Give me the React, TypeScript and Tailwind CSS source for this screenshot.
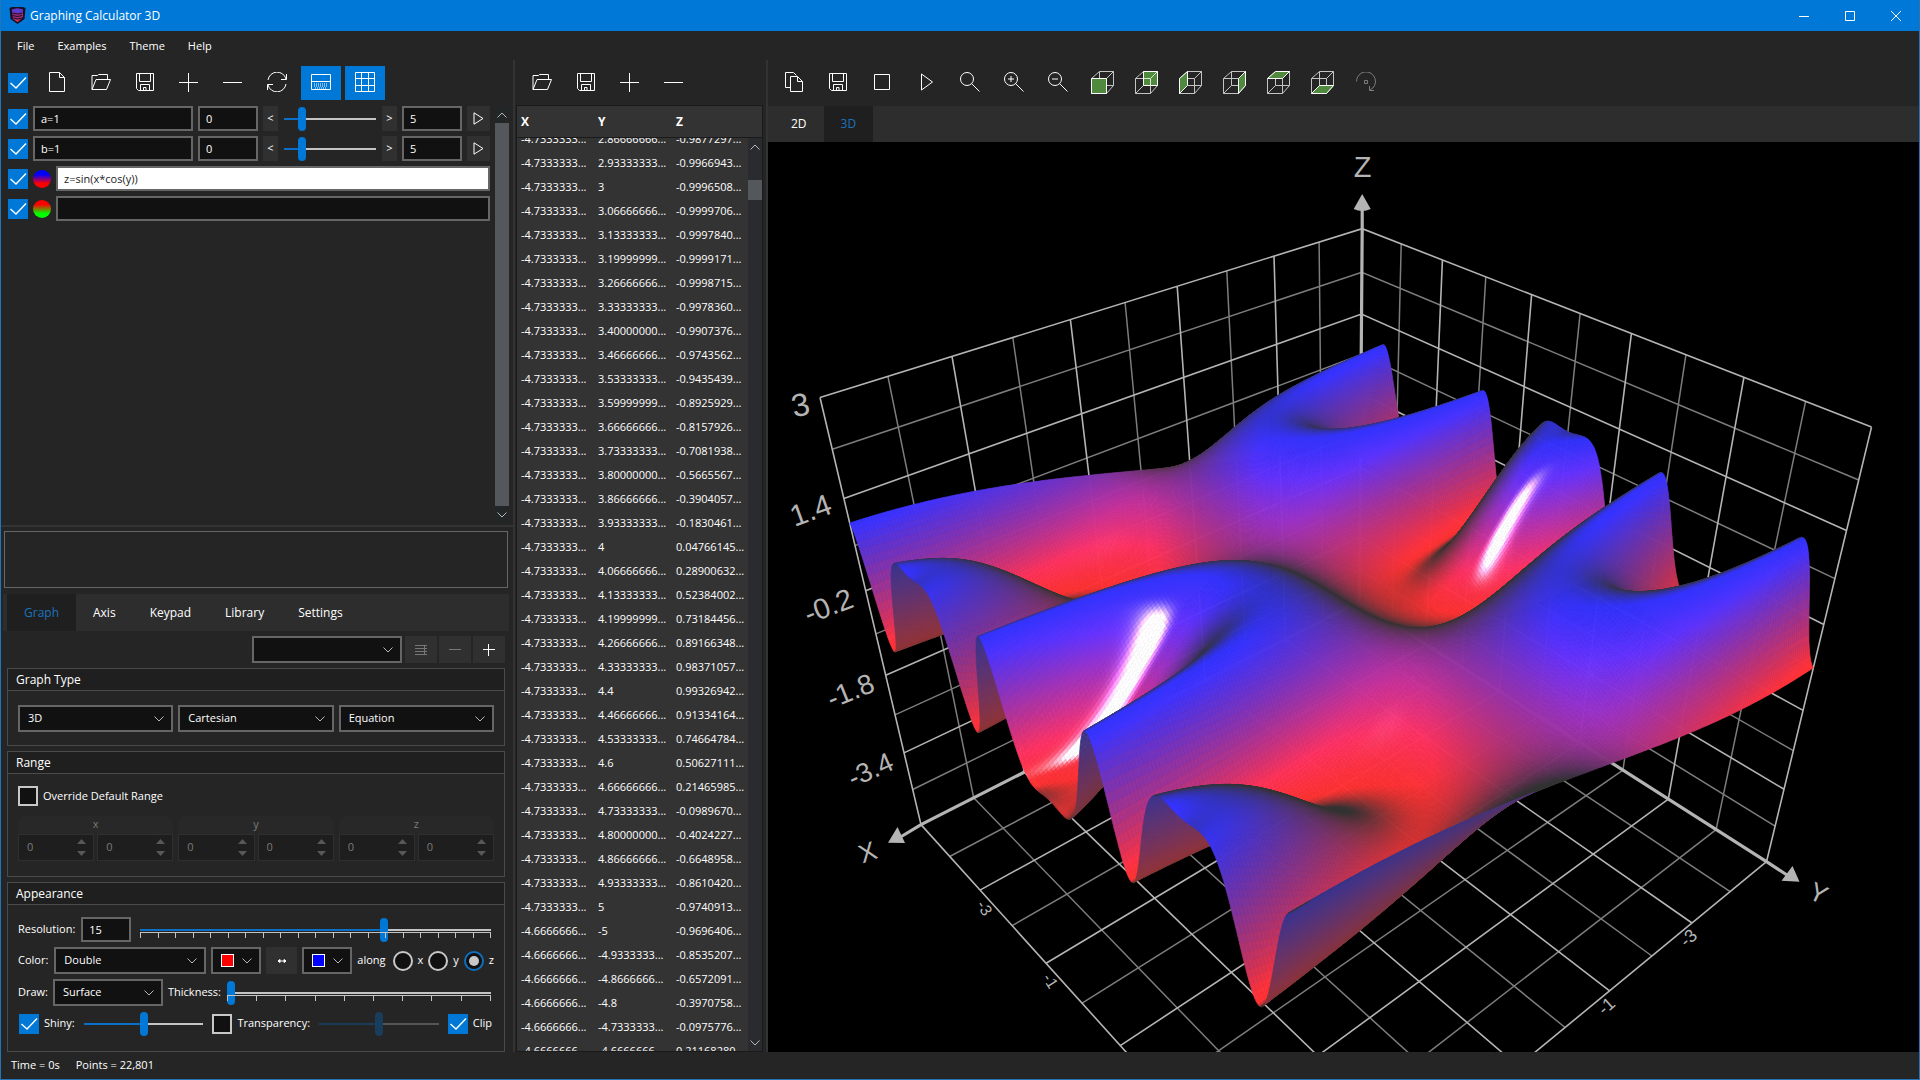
import { useMemo, useState } from 'react';
import type { CSSProperties, ReactNode } from 'react';
import clsx from 'clsx';

/* ---------- icons ---------- */

function Icon({ size = 20, className = '', children }: { size?: number; className?: string; children: ReactNode }) {
  return (
    <svg width={size} height={size} viewBox={`0 0 ${size} ${size}`} fill="none" stroke="currentColor" className={className} aria-hidden="true">
      {children}
    </svg>
  );
}

const NewIcon = () => (
  <Icon><path d="M2.5 .5h10l5 5v14h-15zM12.5 .5v5h5" /></Icon>
);

const OpenIcon = () => (
  <Icon>
    <path d="M1 17.5V3.5h5.5l1-1h9v5M1 17.5L5 7.5h14.5l-4 10z" />
  </Icon>
);

const SaveIcon = () => (
  <Icon>
    <path d="M1.5 1.5h17v17h-15l-2-2zM4.5 1.5v8h11v-8M5.5 18.5v-6h9v6M8.5 18.5v-3h2.5v3" />
  </Icon>
);

const PlusIcon = () => (
  <Icon><path d="M9.5 1v19M0 10.5h19" /></Icon>
);

const MinusIcon = () => (
  <Icon><path d="M0 10.5h19" /></Icon>
);

const RefreshIcon = () => (
  <Icon>
    <path d="M1 8a9.2 9.2 0 0 1 18-1M19.5 2v5.5H14M19 12a9.2 9.2 0 0 1-18 1M.5 18v-5.5H6" />
  </Icon>
);

const KeyboardIcon = () => (
  <Icon>
    <path d="M.5 2.5h19v15H.5zM.5 9.5h19" />
    <path d="M3 12h14M3 14h14M4 16h12" strokeDasharray="1 1" />
  </Icon>
);

const GridIcon = () => (
  <Icon>
    <path d="M.5 .5h19v19H.5zM6.5 .5v19M13.5 .5v19M.5 6.5h19M.5 13.5h19" />
  </Icon>
);

const CopyIcon = () => (
  <Icon>
    <path d="M6.5 15.5h-5v-15h8l3 3M6.5 4.5h7l5 5v10h-12zM13.5 4.5v5h5" />
  </Icon>
);

const StopIcon = () => (
  <Icon><path d="M2.5 2.5h15v15h-15z" /></Icon>
);

const PlayIcon = () => (
  <Icon><path d="M5.5 2v16l11-8z" /></Icon>
);

const SearchIcon = ({ sign }: { sign?: 'plus' | 'minus' }) => (
  <Icon>
    <circle cx="7" cy="7" r="6.5" />
    <path d="M11.5 11.5l8 8" />
    {sign && <path d="M4 7h6" />}
    {sign === 'plus' && <path d="M7 4v6" />}
  </Icon>
);

const RotateIcon = () => (
  <Icon className="text-[#7c7c7c]">
    <path d="M.5 9.5a9.5 9.5 0 1 1 13.5 8.5M18 18.5h-4.5v-4.5M8.500 8.5h3v3h-3z" />
  </Icon>
);

const FACES = {
  front: 'M.5 7.5h15v15H.5z',
  back: 'M8.5 .5h14v14h-14z',
  left: 'M.5 7.5l8-7v14l-8 8z',
  right: 'M15.5 7.5l7-7v14l-7 8z',
  top: 'M.5 7.5l8-7h14l-7 7z',
  bottom: 'M.5 22.5l8-8h14l-7 8z',
};

function CubeIcon({ face }: { face: keyof typeof FACES }) {
  return (
    <Icon size={23}>
      <path stroke="#c4c4c4" d="M8.5 .5h14v14h-14zM.5 7.5h15v15H.5zM.5 7.5l8-7M15.5 7.5l7-7M15.5 22.5l7-8M.5 22.5l8-8" />
      <path stroke="#fff" fill="#4f8a3f" d={FACES[face]} />
      {face === 'back' && <path stroke="#d8e8d0" d="M8.5 7.5h7v7M15.5 7.5l7-7" />}
    </Icon>
  );
}

const Chevron = ({ up = false }: { up?: boolean }) => (
  <svg width="10" height="6" viewBox="0 0 10 6" fill="none" stroke="#b8b8b8" aria-hidden="true">
    <path d={up ? 'M.5 5.5l4.5-4.5 4.5 4.5' : 'M.5 .5l4.5 4.5 4.5-4.5'} />
  </svg>
);

const LogoIcon = () => (
  <svg width="17" height="17" viewBox="0 0 17 17" aria-hidden="true">
    <path d="M.5 1L3 0h11l2.5 1-1 11-7 5-7-5z" fill="#1a1024" />
    <path d="M3 3q5-3 11 0v7l-5.5 5L4 12z" fill="#a02878" />
    <path d="M3 2.5q5-2 11 0l-.5 3q-5 2-10 0z" fill="#5a3ad0" />
    <path d="M3.5 6q5 2 10 0M3.5 8.5q5 2 9.5 0M4.5 11q4 2 8 0" stroke="#1a1024" fill="none" />
    <path d="M5 12q4 2 7 0l-3.5 3z" fill="#e03040" />
  </svg>
);

/* ---------- controls ---------- */

function ToolButton({ label, active = false, children }: { label: string; active?: boolean; children: ReactNode }) {
  return (
    <button
      type="button"
      aria-label={label}
      className={clsx('flex h-[34px] w-10 items-center justify-center pb-[2px] text-white', active && 'bg-[#0078d7]')}
    >
      {children}
    </button>
  );
}

function CheckBox({ label, checked = false, text }: { label: string; checked?: boolean; text?: string }) {
  return (
    <label className="flex shrink-0 items-center gap-[5px]">
      <span className="relative flex h-5 w-5">
        <input
          type="checkbox"
          aria-label={label}
          defaultChecked={checked}
          className="peer h-5 w-5 appearance-none border-2 border-[#c8c8c8] bg-[#111] checked:border-[#0078d7] checked:bg-[#0078d7]"
        />
        <svg viewBox="0 0 20 20" className="pointer-events-none absolute inset-0 hidden peer-checked:block" fill="none" stroke="#fff" strokeWidth="1.4">
          <path d="M2.5 10l5.5 5L18 4.5" />
        </svg>
      </span>
      {text && <span>{text}</span>}
    </label>
  );
}

function TextBox({ label, value, className = '' }: { label: string; value: string; className?: string }) {
  return (
    <input
      type="text"
      aria-label={label}
      defaultValue={value}
      className={clsx('h-[25px] min-w-0 border-2 border-[#666] px-1.5 outline-none', className)}
    />
  );
}

interface SelectProps {
  label: string;
  value: string;
  swatch?: string;
  className?: string;
}

function Select({ label, value, swatch, className = '' }: SelectProps) {
  return (
    <div className={clsx('relative flex h-[27px]', className)}>
      <select
        aria-label={label}
        defaultValue={value}
        className={clsx('w-full appearance-none border-2 border-[#666] bg-[#111] pr-5 pl-2 outline-none', swatch && 'text-transparent')}
      >
        <option>{value}</option>
      </select>
      {swatch && <span className={clsx('pointer-events-none absolute top-[7px] left-[10px] h-[13px] w-[13px] border border-white', swatch)} />}
      <span className="pointer-events-none absolute top-[11px] right-[9px]"><Chevron /></span>
    </div>
  );
}

interface SliderProps {
  label: string;
  percent: number;
  ticks?: number;
  disabled?: boolean;
  className?: string;
}

function Slider({ label, percent, ticks = 0, disabled = false, className = '' }: SliderProps) {
  const [value, setValue] = useState(percent);
  return (
    <div className={clsx('relative flex h-[25px]', disabled && 'opacity-30', className)}>
      <input
        type="range"
        aria-label={label}
        min={0}
        max={100}
        value={value}
        disabled={disabled}
        onChange={(e) => setValue(Number(e.target.value))}
        style={{ '--fill': `${value}%` } as CSSProperties}
        className="h-[25px] w-full min-w-0 appearance-none bg-transparent [&::-webkit-slider-runnable-track]:h-[2px] [&::-webkit-slider-runnable-track]:bg-[linear-gradient(to_right,#0a70c6_var(--fill),#c4c4c4_var(--fill))] [&::-webkit-slider-thumb]:mt-[-11px] [&::-webkit-slider-thumb]:h-6 [&::-webkit-slider-thumb]:w-2 [&::-webkit-slider-thumb]:appearance-none [&::-webkit-slider-thumb]:rounded-[4px] [&::-webkit-slider-thumb]:bg-[#0078d7]"
      />
      {ticks > 0 && (
        <div className="pointer-events-none absolute inset-x-0 top-[15px] flex h-[6px] justify-between border-t border-[#c4c4c4]">
          {Array.from({ length: ticks + 1 }).map((_, i) => (
            <span key={i} className="w-px bg-[#c4c4c4]" />
          ))}
        </div>
      )}
    </div>
  );
}

function Radio({ label, checked = false }: { label: string; checked?: boolean }) {
  return (
    <label className="flex items-center gap-[5px]">
      <span className="relative flex h-5 w-5">
        <input
          type="radio"
          name="along"
          defaultChecked={checked}
          className="peer h-5 w-5 appearance-none rounded-full border-2 border-[#c8c8c8] bg-[#111] checked:border-[#0f6fbe]"
        />
        <span className="pointer-events-none absolute inset-[5px] hidden rounded-full bg-[#c8c8c8] peer-checked:block" />
      </span>
      {label}
    </label>
  );
}

function Spinner({ label }: { label: string }) {
  return (
    <div className="relative flex h-[27px] min-w-0 flex-1">
      <input
        type="text"
        inputMode="numeric"
        aria-label={label}
        defaultValue="0"
        disabled
        className="w-full min-w-0 border border-[#2f2f2f] bg-[#1e1e1e] px-2 text-[#7a7a7a]"
      />
      <svg width="9" height="19" viewBox="0 0 9 19" className="pointer-events-none absolute top-1 right-2" fill="#585858" aria-hidden="true">
        <path d="M0 6l4.5-5L9 6zM0 13h9l-4.5 5z" />
      </svg>
    </div>
  );
}

function SquareButton({ label, className = '', children }: { label: string; className?: string; children: ReactNode }) {
  return (
    <button type="button" aria-label={label} className={clsx('flex shrink-0 items-center justify-center bg-[#303030]', className)}>
      {children}
    </button>
  );
}

function Group({ title, className = '', children }: { title: string; className?: string; children: ReactNode }) {
  return (
    <fieldset className={clsx('flex flex-col border border-[#4a4a48]', className)}>
      <div className="flex h-[22px] shrink-0 items-center border-b border-[#4a4a48] bg-[#1f1f1f] px-2 text-[12px]">{title}</div>
      {children}
    </fieldset>
  );
}

function Tabs({ items, active, className = '' }: { items: string[]; active: string; className?: string }) {
  return (
    <div role="tablist" className={clsx('flex shrink-0 bg-[#2d2d2d]', className)}>
      {items.map((item) => (
        <button
          key={item}
          type="button"
          role="tab"
          aria-selected={item === active}
          className={clsx('px-[17px]', item === active && 'bg-[#1f1f1f] text-[#1a73bd]')}
        >
          {item}
        </button>
      ))}
    </div>
  );
}

/* ---------- left panel ---------- */

function VariableRow({ text }: { text: string }) {
  return (
    <div className="flex h-[25px] items-center gap-[5px]">
      <CheckBox label={`Enable ${text}`} checked />
      <TextBox label="Variable" value={text} className="flex-1 bg-[#111]" />
      <TextBox label="Minimum" value="0" className="w-[60px] bg-[#111]" />
      <SquareButton label="Decrease" className="h-[25px] w-[15px]">&lt;</SquareButton>
      <Slider label="Value" percent={17} className="mx-px w-[92px]" />
      <SquareButton label="Increase" className="h-[25px] w-[15px]">&gt;</SquareButton>
      <TextBox label="Maximum" value="5" className="w-[60px] bg-[#111]" />
      <SquareButton label="Animate" className="h-[25px] w-[23px]">
        <svg width="11" height="13" viewBox="0 0 11 13" fill="none" stroke="#fff"><path d="M1 .8v11.400l9-5.700z" /></svg>
      </SquareButton>
    </div>
  );
}

function EquationRow({ text, dot, className }: { text: string; dot: string; className: string }) {
  return (
    <div className="flex h-[25px] items-center gap-[5px]">
      <CheckBox label="Show graph" checked />
      <span className={clsx('h-[18px] w-[18px] shrink-0 rounded-full', dot)} />
      <TextBox label="Equation" value={text} className={clsx('flex-1', className)} />
    </div>
  );
}

function LeftPanel() {
  return (
    <section className="flex w-[512px] shrink-0 flex-col">
      <div className="flex h-[46px] shrink-0 items-center pl-[7px]">
        <CheckBox label="Enable all" checked />
        <div className="ml-[9px] flex gap-1">
          <ToolButton label="New"><NewIcon /></ToolButton>
          <ToolButton label="Open"><OpenIcon /></ToolButton>
          <ToolButton label="Save"><SaveIcon /></ToolButton>
          <ToolButton label="Add"><PlusIcon /></ToolButton>
          <ToolButton label="Remove"><MinusIcon /></ToolButton>
          <ToolButton label="Refresh"><RefreshIcon /></ToolButton>
          <ToolButton label="Keypad" active><KeyboardIcon /></ToolButton>
          <ToolButton label="Table" active><GridIcon /></ToolButton>
        </div>
      </div>

      <div className="flex min-h-0 flex-1 gap-[5px] pr-1 pb-[2px] pl-[7px]">
        <div className="flex flex-1 flex-col gap-[5px]">
          <VariableRow text="a=1" />
          <VariableRow text="b=1" />
          <EquationRow text="z=sin(x*cos(y))" dot="bg-[linear-gradient(#00f_25%,#f00_75%)]" className="bg-white text-[#222]" />
          <EquationRow text="" dot="bg-[linear-gradient(#f00_25%,#0f0_75%)]" className="bg-[#111]" />
        </div>
        <div className="flex w-[14px] flex-col items-center bg-[#222627]">
          <span className="flex h-[17px] items-center"><Chevron up /></span>
          <span className="w-full flex-1 bg-[#54575c]" />
          <span className="flex h-[17px] items-center"><Chevron /></span>
        </div>
      </div>

      <div className="h-[2px] shrink-0 bg-[#333]" />
      <output className="mt-1 mr-[5px] ml-[3px] h-[57px] shrink-0 border border-[#666]" />

      <Tabs items={['Graph', 'Axis', 'Keypad', 'Library', 'Settings']} active="Graph" className="mt-1.5 mr-1 ml-[2px] h-[37px] pl-1 text-[12px]" />

      <div className="flex shrink-0 flex-col gap-[5px] pt-[5px] pr-2 pl-1.5">
        <div className="flex justify-end gap-[2px]">
          <Select label="Preset" value="" className="w-[150px]" />
          <SquareButton label="Rename preset" className="ml-px h-[27px] w-8 bg-[#292929] text-[#777]">
            <svg width="12" height="10" viewBox="0 0 12 10" fill="none" stroke="currentColor"><path d="M0 .5h12M0 3.5h12M0 6.5h12M0 9.5h12M9.5 1v8" /></svg>
          </SquareButton>
          <SquareButton label="Remove preset" className="h-[27px] w-8 bg-[#292929] text-[#777]">
            <svg width="12" height="12" viewBox="0 0 12 12" stroke="currentColor"><path d="M0 5.5h12" /></svg>
          </SquareButton>
          <SquareButton label="Add preset" className="h-[27px] w-8">
            <svg width="12" height="12" viewBox="0 0 12 12" stroke="#fff"><path d="M0 5.5h12M5.5 0v12" /></svg>
          </SquareButton>
        </div>

        <Group title="Graph Type" className="h-[78px]">
          <div className="flex gap-[5px] px-[10px] pt-[14px]">
            <Select label="Dimension" value="3D" className="flex-1" />
            <Select label="Coordinates" value="Cartesian" className="flex-1" />
            <Select label="Form" value="Equation" className="flex-1" />
          </div>
        </Group>

        <Group title="Range" className="h-[126px]">
          <div className="flex flex-col px-[10px] pt-3">
            <CheckBox label="Override Default Range" text="Override Default Range" />
            <div className="mt-[10px] flex gap-[5px]">
              {['x', 'y', 'z'].map((axis) => (
                <div key={axis} className="flex min-w-0 flex-1 flex-col">
                  <div className="h-[18px] rounded-t-lg bg-[#282828] text-center leading-4 text-[#7a7a7a]">{axis}</div>
                  <div className="flex gap-[3px]">
                    <Spinner label={`${axis} minimum`} />
                    <Spinner label={`${axis} maximum`} />
                  </div>
                </div>
              ))}
            </div>
          </div>
        </Group>

        <Group title="Appearance" className="h-[170px]">
          <div className="flex flex-col gap-[5px] px-[10px] pt-3">
            <div className="flex h-[25px] items-center gap-[5px]">
              <span className="pr-px">Resolution:</span>
              <TextBox label="Resolution" value="15" className="w-[50px] bg-[#111]" />
              <Slider label="Resolution slider" percent={70} ticks={20} className="mr-[3px] ml-1 flex-1" />
            </div>
            <div className="flex h-[27px] items-center gap-[5px]">
              <span className="pr-px">Color:</span>
              <Select label="Color mode" value="Double" className="flex-1" />
              <Select label="First color" value="Red" swatch="bg-[#f00]" className="w-[50px]" />
              <SquareButton label="Swap colors" className="h-[27px] w-[31px]">
                <svg width="10" height="6" viewBox="0 0 10 6" fill="#fff" stroke="#fff"><path d="M1 3h8M3 1.5L1 3l2 1.5zM7 1.5L9 3 7 4.5z" /></svg>
              </SquareButton>
              <Select label="Second color" value="Blue" swatch="bg-[#00f]" className="w-[50px]" />
              <span className="pr-[2px]">along</span>
              <Radio label="x" />
              <Radio label="y" />
              <Radio label="z" checked />
            </div>
            <div className="flex h-[27px] items-center gap-[5px]">
              <span>Draw:</span>
              <Select label="Draw mode" value="Surface" className="w-[110px]" />
              <span className="pr-px">Thickness:</span>
              <Slider label="Thickness" percent={0} ticks={9} className="mr-[3px] flex-1" />
            </div>
            <div className="flex h-[25px] items-center gap-[5px] pr-[2px] pl-px">
              <CheckBox label="Shiny" checked text="Shiny:" />
              <Slider label="Shininess" percent={50} className="mx-1 flex-1" />
              <CheckBox label="Transparency" text="Transparency:" />
              <Slider label="Transparency slider" percent={50} disabled className="mx-1 flex-1" />
              <CheckBox label="Clip" checked text="Clip" />
            </div>
          </div>
        </Group>
      </div>
    </section>
  );
}

/* ---------- value table ---------- */

const X1 = '-4.7333333...';
const X2 = '-4.6666666...';

const ROWS: [string, string, string][] = [
  [X1, '2.86666666...', '-0.9877297...'],
  [X1, '2.93333333...', '-0.9966943...'],
  [X1, '3', '-0.9996508...'],
  [X1, '3.06666666...', '-0.9999706...'],
  [X1, '3.13333333...', '-0.9997840...'],
  [X1, '3.19999999...', '-0.9999171...'],
  [X1, '3.26666666...', '-0.9998715...'],
  [X1, '3.33333333...', '-0.9978360...'],
  [X1, '3.40000000...', '-0.9907376...'],
  [X1, '3.46666666...', '-0.9743562...'],
  [X1, '3.53333333...', '-0.9435439...'],
  [X1, '3.59999999...', '-0.8925929...'],
  [X1, '3.66666666...', '-0.8157926...'],
  [X1, '3.73333333...', '-0.7081938...'],
  [X1, '3.80000000...', '-0.5665567...'],
  [X1, '3.86666666...', '-0.3904057...'],
  [X1, '3.93333333...', '-0.1830461...'],
  [X1, '4', '0.04766145...'],
  [X1, '4.06666666...', '0.28900632...'],
  [X1, '4.13333333...', '0.52384002...'],
  [X1, '4.19999999...', '0.73184456...'],
  [X1, '4.26666666...', '0.89166348...'],
  [X1, '4.33333333...', '0.98371057...'],
  [X1, '4.4', '0.99326942...'],
  [X1, '4.46666666...', '0.91334164...'],
  [X1, '4.53333333...', '0.74664784...'],
  [X1, '4.6', '0.50627111...'],
  [X1, '4.66666666...', '0.21465985...'],
  [X1, '4.73333333...', '-0.0989670...'],
  [X1, '4.80000000...', '-0.4024227...'],
  [X1, '4.86666666...', '-0.6648958...'],
  [X1, '4.93333333...', '-0.8610420...'],
  [X1, '5', '-0.9740913...'],
  [X2, '-5', '-0.9696406...'],
  [X2, '-4.9333333...', '-0.8535207...'],
  [X2, '-4.8666666...', '-0.6572091...'],
  [X2, '-4.8', '-0.3970758...'],
  [X2, '-4.7333333...', '-0.0975776...'],
  [X2, '-4.6666666...', '0.21168280...'],
];

function TablePanel() {
  return (
    <section className="flex w-[253px] shrink-0 flex-col border-l-2 border-[#333] pr-[3px]">
      <div className="flex h-[45px] shrink-0 items-center gap-1 pt-px pl-[7px]">
        <ToolButton label="Open table"><OpenIcon /></ToolButton>
        <ToolButton label="Save table"><SaveIcon /></ToolButton>
        <ToolButton label="Add row"><PlusIcon /></ToolButton>
        <ToolButton label="Remove row"><MinusIcon /></ToolButton>
      </div>
      <div className="ml-px flex min-h-0 flex-1 flex-col border border-[#1a1a1a] bg-[#333]">
        <table className="h-8 w-full shrink-0 table-fixed border-b border-[#1a1a1a] text-left text-[12px]">
          <thead>
            <tr>
              <th scope="col" className="w-[77px] pl-1 font-bold">X</th>
              <th scope="col" className="w-[78px] pl-1 font-bold">Y</th>
              <th scope="col" className="pl-1 font-bold">Z</th>
            </tr>
          </thead>
        </table>
        <div className="flex min-h-0 flex-1">
          <div className="flex-1 overflow-hidden">
            <table className="-mt-[11px] w-full table-fixed">
              <tbody>
                {ROWS.map(([x, y, z], i) => (
                  <tr key={i} className="h-6">
                    <td className="w-[77px] pl-1">{x}</td>
                    <td className="w-[78px] pl-1">{y}</td>
                    <td className="pl-1">{z}</td>
                  </tr>
                ))}
              </tbody>
            </table>
          </div>
          <div className="flex w-[14px] flex-col items-center bg-[#2a2b2e]">
            <span className="flex h-[17px] items-center"><Chevron up /></span>
            <span className="mt-[25px] h-5 w-full bg-[#54575c]" />
            <span className="mt-auto flex h-[17px] items-center"><Chevron /></span>
          </div>
        </div>
      </div>
    </section>
  );
}

/* ---------- 3D plot of z = sin(x * cos(y)) ---------- */

type Vec = [number, number, number];

const CENTER_X = 575;
const CENTER_Y = 455;
const FOCAL = 1388.2;
const PITCH = (34.55 * Math.PI) / 180;
const YAW_COS = 0.7492;
const YAW_SIN = 0.6624;
const SIN_P = Math.sin(PITCH);
const COS_P = Math.cos(PITCH);

// camera space: right, down, forward
const AXIS_X: Vec = [-YAW_COS, YAW_SIN * SIN_P, -YAW_SIN * COS_P];
const AXIS_Y: Vec = [YAW_SIN, YAW_COS * SIN_P, -YAW_COS * COS_P];
const AXIS_Z: Vec = [0, -COS_P, -SIN_P];
const ORIGIN: Vec = [-0.105, -0.013, 20.34];

function toCamera(x: number, y: number, z: number, o: Vec = ORIGIN): Vec {
  return [0, 1, 2].map((i) => o[i] + x * AXIS_X[i] + y * AXIS_Y[i] + z * AXIS_Z[i]) as Vec;
}

function project(x: number, y: number, z: number) {
  const [cx, cy, cz] = toCamera(x, y, z);
  return `${(CENTER_X + (FOCAL * cx) / cz).toFixed(1)},${(CENTER_Y + (FOCAL * cy) / cz).toFixed(1)}`;
}

const dot = (a: Vec, b: Vec) => a[0] * b[0] + a[1] * b[1] + a[2] * b[2];
const unit = (a: Vec): Vec => {
  const n = Math.sqrt(dot(a, a));
  return [a[0] / n, a[1] / n, a[2] / n];
};

function shade(x: number, y: number) {
  const arg = x * Math.cos(y);
  const z = Math.sin(arg);
  const gx = Math.cos(y) * Math.cos(arg);
  const gy = -x * Math.sin(y) * Math.cos(arg);
  const normal = unit(toCamera(-gx, -gy, 1, [0, 0, 0]));
  const p = toCamera(x, y, z);
  const view = unit([-p[0], -p[1], -p[2]]);
  const light: Vec = [0, 0, -1];
  const front = dot(normal, view) > 0;
  const nl = dot(normal, light);
  const half = unit([view[0] + light[0], view[1] + light[1], view[2] + light[2]]);
  const diffuse = front ? Math.min(1, Math.max(0, nl) * 1.1) : 0.28 + 0.25 * Math.abs(nl);
  const spec = front ? Math.pow(Math.max(0, dot(normal, half)), 125) * 1.8 : 0;
  const t = (z + 1) / 2;
  const channel = (base: number) => Math.round(255 * Math.min(1, 0.2 + Math.min(0.8, base * diffuse) + spec));
  return `rgb(${channel(1 - t)},${channel(0)},${channel(t)})`;
}

// the surface folds much faster along y, so it gets the finer steps
const STEPS_X = 190;
const STEPS_Y = 320;
const coordX = (i: number) => -5 + (10 * i) / STEPS_X;
const coordY = (j: number) => -5 + (10 * j) / STEPS_Y;

function buildSurface() {
  const points = Array.from({ length: STEPS_X + 1 }, (_, i) =>
    Array.from({ length: STEPS_Y + 1 }, (_, j) => {
      const x = coordX(i);
      const y = coordY(j);
      return project(x, y, Math.sin(x * Math.cos(y)));
    }),
  );
  const cells: { d: string; color: string }[] = [];
  // far corner first, so nearer cells cover the ones behind
  for (let i = 0; i < STEPS_X; i++) {
    for (let j = 0; j < STEPS_Y; j++) {
      cells.push({
        d: `M${points[i][j]}L${points[i + 1][j]}L${points[i + 1][j + 1]}L${points[i][j + 1]}z`,
        color: shade(coordX(i + 0.5), coordY(j + 0.5)),
      });
    }
  }
  return cells;
}

function buildGrid() {
  let major = '';
  let minor = '';
  for (let k = 0; k <= 10; k++) {
    const v = -5 + k;
    const h = -5 + 0.8 * k;
    const d = [
      `M${project(v, -5, -5)}L${project(v, -5, 3)}`,
      `M${project(-5, v, -5)}L${project(-5, v, 3)}`,
      `M${project(5, -5, h)}L${project(-5, -5, h)}L${project(-5, 5, h)}`,
      `M${project(v, -5, -5)}L${project(v, 5, -5)}`,
      `M${project(-5, v, -5)}L${project(5, v, -5)}`,
    ].join('');
    if (k % 2 === 0) major += d;
    else minor += d;
  }
  return { major, minor };
}

const LABELS = [
  { text: 'Z', x: 594, y: 25, angle: 0, size: 29 },
  { text: '3', x: 32, y: 263, angle: -12, size: 32 },
  { text: '1.4', x: 42, y: 368, angle: -20, size: 30 },
  { text: '-0.2', x: 60, y: 464, angle: -21, size: 29 },
  { text: '-1.8', x: 82, y: 549, angle: -22, size: 28 },
  { text: '-3.4', x: 102, y: 628, angle: -24, size: 27 },
  { text: 'X', x: 99, y: 710, angle: -20, size: 26 },
  { text: 'Y', x: 1050, y: 751, angle: 25, size: 26 },
  { text: '-3', x: 216, y: 766, angle: 58, size: 16 },
  { text: '-1', x: 282, y: 839, angle: 58, size: 16 },
  { text: '-3', x: 920, y: 796, angle: -42, size: 18 },
  { text: '-1', x: 838, y: 864, angle: -42, size: 18 },
];

function Plot() {
  const grid = useMemo(buildGrid, []);
  const cells = useMemo(buildSurface, []);

  return (
    <svg viewBox="0 0 1150 910" className="h-full w-full font-['Liberation_Sans',sans-serif]" role="img" aria-label="Surface plot">
      <g fill="none">
        <path d={grid.minor} stroke="#7d7d7d" strokeWidth="1.5" />
        <path d={grid.major} stroke="#b4b4b4" strokeWidth="1.6" />
        <path d={`M593.7 60V87L${project(-5, -5, -5)}L${project(5, -5, -5)}L132 695`} stroke="#b4b4b4" strokeWidth="3.2" />
        <path d={`M${project(-5, -5, -5)}L${project(-5, 5, -5)}L1020 734`} stroke="#b4b4b4" strokeWidth="3.2" />
      </g>
      <path d="M593.7 52l8.5 15q-8.5 4-17 0zM119.5 700.7L129 685l7.5 16zM1031 739.7l-7-15.7-11 14.7z" fill="#b4b4b4" />
      <g fill="#b4b4b4" textAnchor="middle" dominantBaseline="central">
        {LABELS.map(({ text, x, y, angle, size }, i) => (
          <text key={i} x={x} y={y} fontSize={size} transform={`rotate(${angle} ${x} ${y})`}>{text}</text>
        ))}
      </g>
      <g strokeWidth="0.7">
        {cells.map((cell, i) => (
          <path key={i} d={cell.d} fill={cell.color} stroke={cell.color} />
        ))}
      </g>
    </svg>
  );
}

function GraphPanel() {
  return (
    <section className="flex min-w-0 flex-1 flex-col border-l-2 border-[#333]">
      <div className="flex h-[46px] shrink-0 items-center gap-1 pl-1.5">
        <ToolButton label="Copy"><CopyIcon /></ToolButton>
        <ToolButton label="Save image"><SaveIcon /></ToolButton>
        <ToolButton label="Stop"><StopIcon /></ToolButton>
        <ToolButton label="Play"><PlayIcon /></ToolButton>
        <ToolButton label="Zoom"><SearchIcon /></ToolButton>
        <ToolButton label="Zoom in"><SearchIcon sign="plus" /></ToolButton>
        <ToolButton label="Zoom out"><SearchIcon sign="minus" /></ToolButton>
        <ToolButton label="Front view"><CubeIcon face="front" /></ToolButton>
        <ToolButton label="Back view"><CubeIcon face="back" /></ToolButton>
        <ToolButton label="Left view"><CubeIcon face="left" /></ToolButton>
        <ToolButton label="Right view"><CubeIcon face="right" /></ToolButton>
        <ToolButton label="Top view"><CubeIcon face="top" /></ToolButton>
        <ToolButton label="Bottom view"><CubeIcon face="bottom" /></ToolButton>
        <ToolButton label="Rotate"><RotateIcon /></ToolButton>
      </div>
      <Tabs items={['2D', '3D']} active="3D" className="h-9 pl-1.5 text-[12px]" />
      <div className="min-h-0 flex-1 overflow-hidden bg-black">
        <Plot />
      </div>
    </section>
  );
}

export default function App() {
  return (
    <div className="flex h-screen flex-col overflow-hidden border border-t-0 border-[#2574b5] bg-[#252525] font-['Open_Sans','Noto_Sans',sans-serif] text-[11px] text-white">
      <header className="flex h-[31px] shrink-0 items-center bg-[#0078d7] pl-2">
        <LogoIcon />
        <h1 className="ml-1 text-[12px]">Graphing Calculator 3D</h1>
        <div className="ml-auto flex h-full">
          <button type="button" aria-label="Minimize" className="flex w-[46px] items-center justify-center">
            <Icon size={10}><path d="M0 5.5h10" /></Icon>
          </button>
          <button type="button" aria-label="Maximize" className="flex w-[46px] items-center justify-center">
            <Icon size={10}><path d="M.5 .5h9v9h-9z" /></Icon>
          </button>
          <button type="button" aria-label="Close" className="flex w-[46px] items-center justify-center">
            <Icon size={10}><path d="M0 0l10 10M10 0L0 10" /></Icon>
          </button>
        </div>
      </header>

      <nav className="flex h-[29px] shrink-0 items-center gap-[23px] pt-[2px] pl-4">
        <button type="button">File</button>
        <button type="button">Examples</button>
        <button type="button">Theme</button>
        <button type="button">Help</button>
      </nav>

      <main className="flex min-h-0 flex-1">
        <LeftPanel />
        <TablePanel />
        <GraphPanel />
      </main>

      <footer className="flex h-[27px] shrink-0 items-center gap-4 pl-[10px]">
        <span>Time = 0s</span>
        <span>Points = 22,801</span>
      </footer>
    </div>
  );
}
